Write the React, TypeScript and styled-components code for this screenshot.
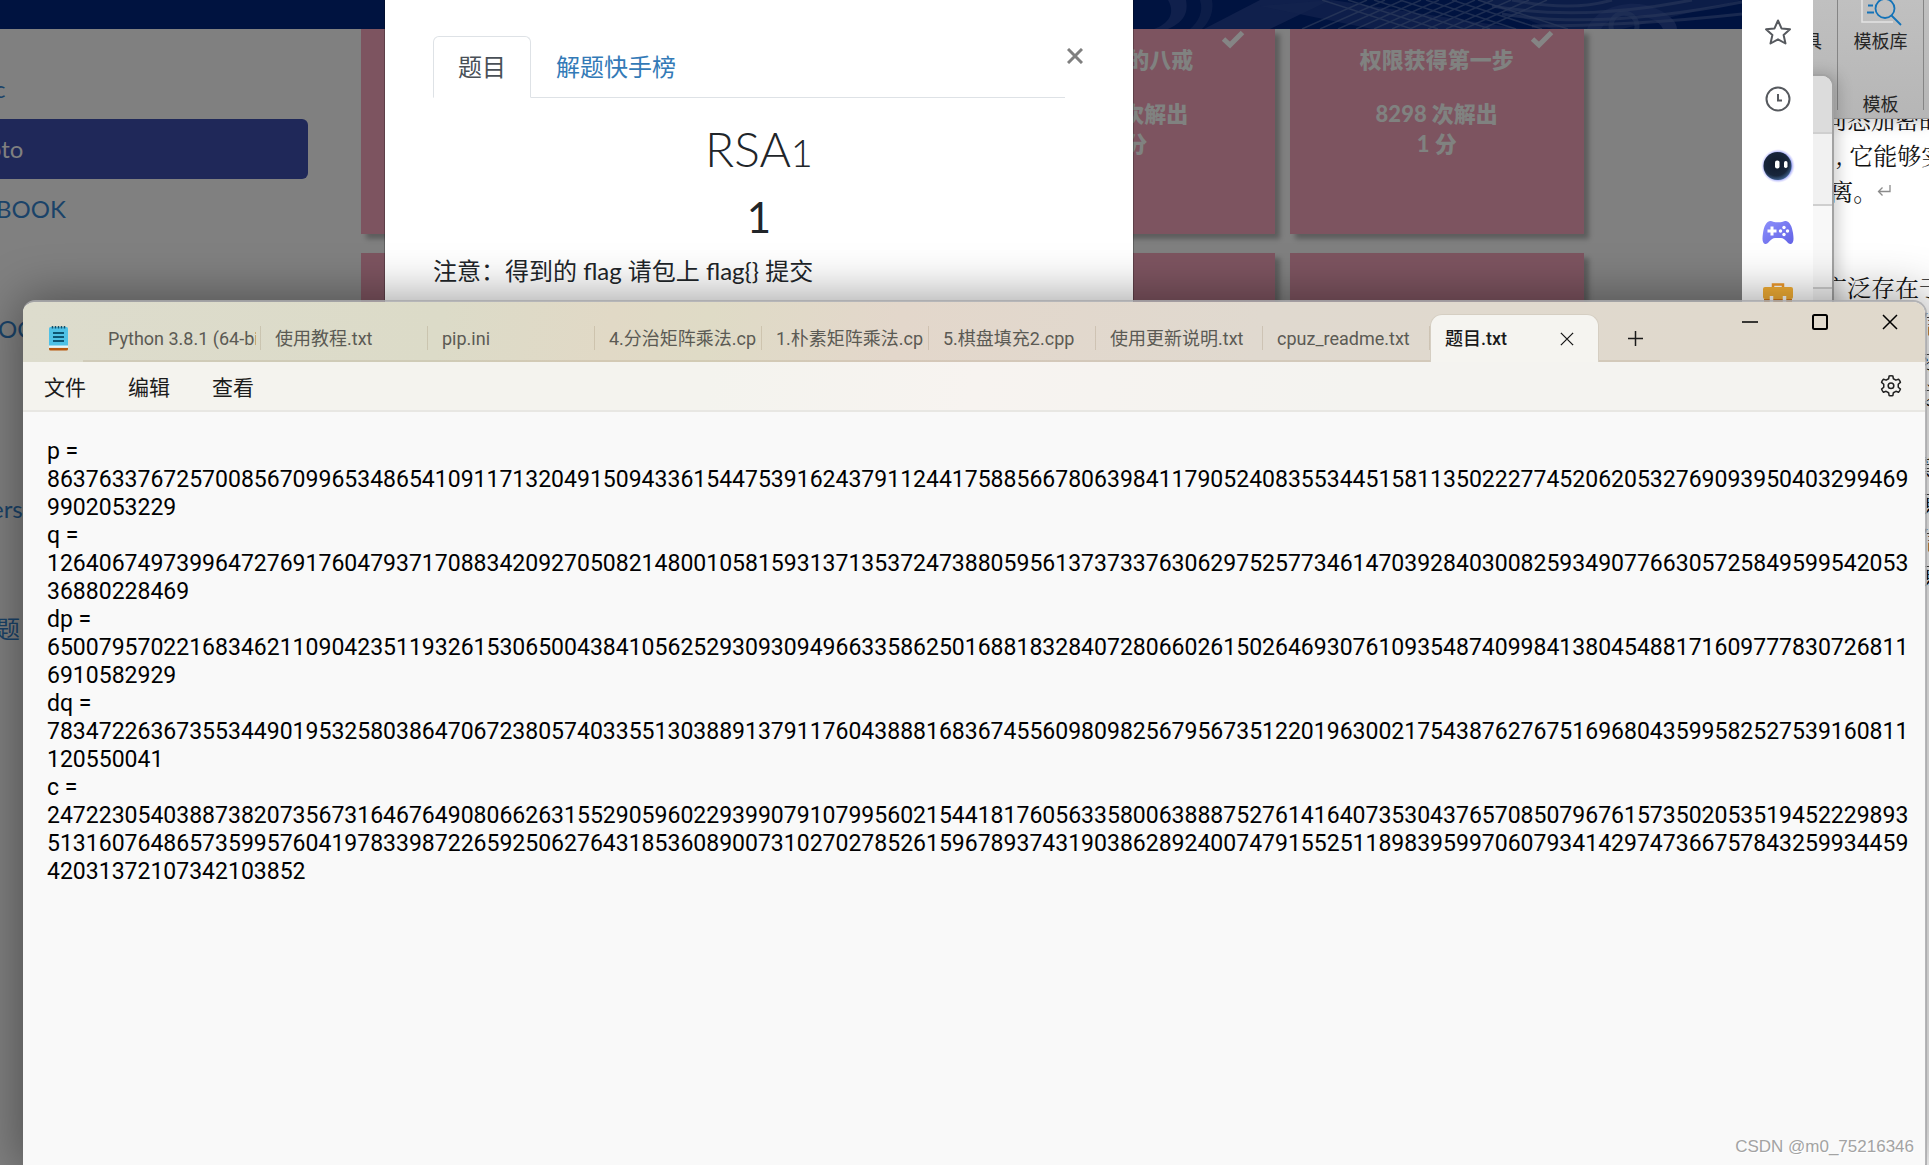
import React from "react";
import styled, { createGlobalStyle } from "styled-components";

const LATIN = '"Noto Sans", "Noto Sans CJK SC", sans-serif';
const LATO = 'Lato, "Noto Sans CJK SC", sans-serif';

const Global = createGlobalStyle`
  * { box-sizing: border-box; }
  body { margin: 0; font-family: ${LATIN}; overflow: hidden; }
  button { border: 0; padding: 0; margin: 0; background: none; font: inherit; color: inherit; }
  a { text-decoration: none; }
  h1, h2, p { margin: 0; font-weight: 400; }
  svg { display: block; }
`;

const Desktop = styled.div`
  position: relative;
  min-height: 100vh;
  overflow: hidden;
  background: #fff;
`;

/* ---------- word processor, far right ---------- */
const Writer = styled.section`
  position: absolute;
  top: 0;
  right: 0;
  bottom: 0;
  isolation: isolate;
  width: 116px;
  overflow: hidden;
  background: #fff;
`;
const Ribbon = styled.div`
  position: relative;
  z-index: 1;
  display: flex;
  height: 119px;
  background: linear-gradient(#c0c0c0, #b6b6b6);
  border-bottom: 1px solid #9a9a9a;
  box-shadow: 0 4px 14px rgba(0, 0, 0, 0.22);
  color: #262626;
  font: 18px/24px "Noto Sans CJK SC", sans-serif;
`;
const RibbonEdge = styled.div`
  width: 25px;
  height: 110px;
  padding-top: 28px;
  overflow: hidden;
  direction: rtl;
  padding-right: 15px;
  border-right: 1px solid #858585;
`;
const RibbonGroup = styled.div`
  display: flex;
  flex-direction: column;
  justify-content: space-between;
  align-items: center;
  width: 86px;
  height: 110px;
  border-right: 1px solid #858585;
`;
const RibbonLabel = styled.span`
  line-height: 14px;
`;
const RibbonButton = styled.button`
  display: flex;
  flex-direction: column;
  align-items: center;
  gap: 2px;
`;
const Document = styled.div`
  width: 160px;
  margin: -18px 0 0 10px;
  color: #111;
  font: 24px/36px "Noto Serif CJK SC", "Noto Sans CJK SC", serif;
  font-weight: 300;
  white-space: pre;
`;
const DocLine = styled.p<{ $blank: boolean }>`
  display: flex;
  align-items: center;
  height: ${(p) => (p.$blank ? 60 : 36)}px;
`;

const BackWindow = styled.section`
  position: absolute;
  top: 74px;
  right: 95px;
  bottom: 0;
  width: 40px;
  border: 2px solid #a2a2a2;
  border-radius: 0 12px 0 0;
  background: #f4f4f4;
  box-shadow: 4px 0 16px rgba(0, 0, 0, 0.2);
`;
const BackRow = styled.div<{ $h: number; $bg: string }>`
  height: ${(p) => p.$h}px;
  background: ${(p) => p.$bg};
  border-bottom: 2px solid #cfcfcf;

  &:first-child {
    border-radius: 0 10px 0 0;
  }
`;

/* ---------- browser ---------- */
const Browser = styled.section`
  position: absolute;
  inset: 0 116px 0 0;
  display: flex;
`;
const Page = styled.div`
  position: relative;
  flex: 1;
  min-width: 0;
  overflow: hidden;
  background: #808080;
`;
const Banner = styled.header`
  display: flex;
  justify-content: flex-end;
  height: 29px;
  background: #001340;
  overflow: hidden;
`;
const PageBody = styled.div`
  display: flex;
  gap: 53px;
  padding-right: 158px;
`;
const Nav = styled.nav`
  flex: none;
  display: flex;
  flex-direction: column;
  width: 308px;
  padding-top: 30px;
  overflow: hidden;
`;
const NavLink = styled.a<{ $active?: boolean; $cut: number }>`
  height: 60px;
  line-height: 60px;
  font-family: ${LATO};
  font-size: 24px;
  white-space: nowrap;
  text-indent: -${(p) => p.$cut}px;
  color: ${(p) => (p.$active ? "#808080" : "#1a4369")};
  background: ${(p) => (p.$active ? "#1f2859" : "transparent")};
  border-radius: 0 6px 6px 0;
`;
const Cards = styled.div`
  flex: 1;
  display: grid;
  grid-template-columns: repeat(4, 1fr);
  gap: 19px 15px;
  align-content: start;
`;
const Card = styled.button`
  position: relative;
  display: flex;
  flex-direction: column;
  align-items: center;
  height: 205px;
  padding-top: 16px;
  background: #7d5460;
  box-shadow: 5px 5px 5px rgba(0, 0, 0, 0.28);
  color: #808280;
  font: 900 22px/30px ${LATO};
  white-space: pre;
`;
const CardTitle = styled.span`
  margin-bottom: 24px;
`;
const CardCheck = styled.span`
  position: absolute;
  top: 0;
  right: 30px;
`;

const Modal = styled.div`
  position: absolute;
  top: 0;
  left: 385px;
  width: 748px;
  height: 420px;
  padding: 36px 48px 0;
  background: #fff;
  box-shadow: 0 0 0 1px rgba(0, 0, 0, 0.25);
  color: #212529;
  font: 24px/36px ${LATO};
`;
const ModalTop = styled.div`
  display: flex;
  align-items: flex-start;
`;
const ModalTabs = styled.div`
  flex: 1;
  display: flex;
  border-bottom: 1px solid #dee2e6;
`;
const ModalTab = styled.button<{ $active?: boolean }>`
  height: 62px;
  margin-bottom: -1px;
  padding: 0 24px;
  border: 1px solid ${(p) => (p.$active ? "#dee2e6" : "transparent")};
  border-bottom-color: ${(p) => (p.$active ? "#fff" : "transparent")};
  border-radius: 6px 6px 0 0;
  color: ${(p) => (p.$active ? "#495057" : "#337ab7")};
`;
const ModalClose = styled.button`
  margin-top: 10px;
  width: 20px;
  height: 20px;
  display: grid;
  place-items: center;
`;
const ModalTitle = styled.h1`
  margin-top: 21px;
  text-align: center;
  font: 300 48px/60px ${LATO};
`;
const OldStyle = styled.span`
  font-size: 38px;
`;
const ModalScore = styled.h2`
  margin-top: 8px;
  text-align: center;
  font: 400 42px/54px ${LATO};
`;
const ModalNote = styled.p`
  margin-top: 9px;
`;

const Side = styled.aside`
  display: flex;
  flex-direction: column;
  align-items: center;
  gap: 31px;
  width: 71px;
  padding-top: 14px;
  background: #fff;
`;
const SideButton = styled.button`
  display: grid;
  place-items: center;
  width: 36px;
  height: 36px;
`;

/* ---------- notepad ---------- */
const Notepad = styled.main`
  position: absolute;
  inset: 300px 2px 0 23px;
  display: flex;
  flex-direction: column;
  border: 2px solid rgba(170, 170, 172, 0.85);
  border-width: 2px 2px 0 0;
  border-radius: 12px 14px 0 0;
  box-shadow: 0 0 48px 4px rgba(0, 0, 0, 0.38);
  background: #f9f9f9;
  background-clip: padding-box;
  overflow: hidden;
`;
const TitleBar = styled.div`
  display: flex;
  height: 60px;
  background: linear-gradient(100deg, #dddccd 0, #dcdbc8 22%, #e1d9c6 31%, #dfdbc6 36%, #e3d7cb 46%, #e0d9cf 65%, #e0d9cc 100%);
`;
const AppIcon = styled.div`
  width: 60px;
  padding: 23px 0 0 26px;
`;
const Tabs = styled.div`
  display: flex;
  align-items: flex-end;
  padding-left: 11px;
  border-bottom: 2px solid rgba(165, 145, 120, 0.22);
`;
const Tab = styled.button`
  display: flex;
  align-items: center;
  width: 167px;
  height: 46px;
  padding: 3px 5px 0 14px;
  color: #5b5a54;
  font: 18px/24px Roboto, "Noto Sans CJK SC", sans-serif;
  background: linear-gradient(rgba(150, 130, 100, 0.25), rgba(150, 130, 100, 0.25)) right 12px / 1px 24px no-repeat;
`;
const TabName = styled.span`
  flex: 1;
  overflow: hidden;
  text-align: left;
  white-space: nowrap;
`;
const ActiveTab = styled.div`
  display: flex;
  align-items: center;
  width: 169px;
  height: 48px;
  margin-bottom: -2px;
  padding: 0 24px 0 14px;
  border: 1px solid #d5cec2;
  border-width: 1px 1px 0;
  border-radius: 12px 12px 0 0;
  background: #f5f4f0;
  color: #1a1a1a;
  font: 500 18px/24px Roboto, "Noto Sans CJK SC", sans-serif;
`;
const NewTab = styled.button`
  display: grid;
  place-items: center;
  width: 61px;
  height: 46px;
  padding: 2px 0 0 12px;
`;
const WindowButtons = styled.div`
  display: flex;
  margin-left: auto;
`;
const WindowButton = styled.button`
  display: grid;
  place-items: center;
  width: 70px;
  height: 40px;
`;
const MenuBar = styled.div`
  display: flex;
  align-items: center;
  height: 50px;
  border-bottom: 2px solid #e8e7e3;
  background: linear-gradient(100deg, #f4f3ee 0, #f4f3ee 36%, #f7f3f0 50%, #f4f3f0 70%);
  color: #1b1b1b;
  font: 21px/28px "Noto Sans CJK SC", sans-serif;
`;
const MenuItem = styled.button`
  padding: 0 21px;
`;
const Settings = styled.button`
  margin: 0 21px 0 auto;
`;
const Editor = styled.textarea`
  flex: 1;
  width: 100%;
  padding: 26px 6px 0 24px;
  border: 0;
  outline: 0;
  resize: none;
  overflow: hidden;
  background: #f9f9f9;
  color: #000;
  font: 23px/28px Roboto, "Noto Sans CJK SC", sans-serif;
  overflow-wrap: break-word;
`;
const Watermark = styled.div`
  position: absolute;
  right: 15px;
  bottom: 6px;
  color: #a3a3a3;
  font: 17px/24px "Liberation Sans", Arial, sans-serif;
  text-shadow: 1px 1px 0 #fff;
`;

const NAV = [
  { text: "c", cut: 6 },
  { text: "pto", cut: 12, active: true },
  { text: "BOOK", cut: 4 },
  { text: "", cut: 0 },
  { text: "OOK", cut: 2 },
  { text: "", cut: 0 },
  { text: "", cut: 0 },
  { text: "ers", cut: 9 },
  { text: "", cut: 0 },
  { text: "题", cut: 4 },
];

const TABS = [
  "Python 3.8.1 (64-bit)",
  "使用教程.txt",
  "pip.ini",
  "4.分治矩阵乘法.cpp",
  "1.朴素矩阵乘法.cpp",
  "5.棋盘填充2.cpp",
  "使用更新说明.txt",
  "cpuz_readme.txt",
];

const DOC = ["同态加密的", "  , 它能够实", " 离。", "", "广泛存在于", "　　　　信", "　　　　求", "　　　　之", "", "　　　　等", "　　　　原", "　　　　信", "　　　　原"];

const CONTENT = [
  "p = 8637633767257008567099653486541091171320491509433615447539162437911244175885667806398411790524083553445158113502227745206205327690939504032994699902053229",
  "q = 12640674973996472769176047937170883420927050821480010581593137135372473880595613737337630629752577346147039284030082593490776630572584959954205336880228469",
  "dp = 6500795702216834621109042351193261530650043841056252930930949663358625016881832840728066026150264693076109354874099841380454881716097778307268116910582929",
  "dq = 783472263673553449019532580386470672380574033551303889137911760438881683674556098098256795673512201963002175438762767516968043599582527539160811120550041",
  "c = 24722305403887382073567316467649080662631552905960229399079107995602154418176056335800638887527614164073530437657085079676157350205351945222989351316076486573599576041978339872265925062764318536089007310270278526159678937431903862892400747915525118983959970607934142974736675784325993445942031372107342103852",
].join("\n");

const Check = () => (
  <svg width="24" height="20" viewBox="0 0 24 20" fill="none" stroke="#858585" strokeWidth="5">
    <path d="M2.500 10 9 16 21.500 3.500" />
  </svg>
);

const BannerArt = () => (
  <svg width="610" height="29" viewBox="0 0 610 29" fill="none">
    <g fill="#14244f">
      <path d="M36 0c8 14 0 24-14 29h14c18-8 20-18 18-29z" opacity=".8" />
      <path d="M68 0c4 12-2 22-10 29h12c8-8 12-18 10-29z" opacity=".6" />
      <path d="M72 29 128 0h70l-60 29z" opacity=".8" />
      <path d="M128 6 240 29h150L200 0z" opacity=".7" />
      <path d="M345 0 420 29h70L610 0z" opacity=".6" />
      <path d="M455 29c8-22 46-32 70-20 14 6 20 14 20 20h-14c-8-18-52-18-62 0z" />
    </g>
    <g stroke="#33415f" strokeWidth="1.500" opacity=".6">
      {Array.from({ length: 11 }, (_, i) => (
        <path key={i} d={`M${170 + i * 18} 29 L${235 + i * 18} 0`} />
      ))}
      {Array.from({ length: 7 }, (_, i) => (
        <path key={"b" + i} d={`M${190 + i * 26} 0 L${280 + i * 26} 29`} />
      ))}
    </g>
    <g stroke="#2a385b" strokeWidth="3" opacity=".6">
      <path d="M370 14 Q470 30 610 2" />
      <path d="M360 6 Q450 22 560 0" />
      <path d="M400 26 Q500 26 610 14" />
      <path d="M380 0 Q440 12 480 0" />
    </g>
    <circle cx="492" cy="26" r="13" stroke="#26355a" strokeWidth="5" opacity=".5" />
  </svg>
);

const Star = () => (
  <svg width="28" height="28" viewBox="0 0 28 28" fill="none" stroke="#56595e" strokeWidth="2" strokeLinejoin="round">
    <path d="M14 2.500l3.500 7.900 8.500.9-6.400 5.700 1.900 8.500L14 21.300l-7.500 4.200 1.900-8.500L2 11.300l8.500-.9z" />
  </svg>
);
const Clock = () => (
  <svg width="28" height="28" viewBox="0 0 28 28" fill="none" stroke="#56595e" strokeWidth="2">
    <circle cx="14" cy="14" r="11.500" />
    <path d="M14 9v6.500h4" />
  </svg>
);
const Ball = () => (
  <svg width="34" height="34" viewBox="0 0 34 34">
    <defs>
      <radialGradient id="halo">
        <stop offset=".8" stopColor="#9aa4f5" />
        <stop offset="1" stopColor="#d6d0ff" stopOpacity="0" />
      </radialGradient>
      <radialGradient id="ball" cx=".45" cy=".4" r=".6">
        <stop offset="0" stopColor="#10192b" />
        <stop offset=".75" stopColor="#18263c" />
        <stop offset="1" stopColor="#3b5c86" />
      </radialGradient>
    </defs>
    <circle cx="17" cy="17" r="17" fill="url(#halo)" />
    <circle cx="16.500" cy="17" r="14" fill="url(#ball)" />
    <rect x="14" y="11.500" width="4.500" height="8" rx="2" fill="#fff" />
    <rect x="23" y="12" width="3.500" height="7" rx="1.700" fill="#fff" />
  </svg>
);
const Pad = () => (
  <svg width="32" height="26" viewBox="0 0 32 26">
    <defs>
      <linearGradient id="pad" x2="1" y2="1">
        <stop stopColor="#8d90fb" />
        <stop offset="1" stopColor="#6262e6" />
      </linearGradient>
    </defs>
    <path fill="url(#pad)" d="M8 1c2-.6 3.500 1.200 5.500 1.200h5C20.500 2.200 22 .4 24 1c4 .9 6 5.500 7 12 .9 6 .8 10-2 11-3 .9-5.500-6-10-6h-6c-4.500 0-7 6.900-10 6C.2 23 .1 19 1 13 2 6.500 4 1.900 8 1z" />
    <path stroke="#fff" strokeWidth="3" d="M10 6.500v9M5.500 11h9" />
    <g fill="#fff">
      <circle cx="22" cy="7.500" r="1.700" />
      <circle cx="22" cy="14.500" r="1.700" />
      <circle cx="18.500" cy="11" r="1.700" />
      <circle cx="25.500" cy="11" r="1.700" />
    </g>
  </svg>
);
const Toolbox = () => (
  <svg width="32" height="36" viewBox="0 0 32 36">
    <path d="M11 6V2.500h10V6" fill="none" stroke="#f09a2a" strokeWidth="2.500" />
    <rect x="1" y="5" width="30" height="12" rx="2" fill="#f5b036" />
    <rect x="2" y="17" width="28" height="9" fill="#d97c17" />
    <path d="M9.500 14v7M22.500 14v7" stroke="#fff" strokeWidth="3.500" />
  </svg>
);
const Template = () => (
  <svg width="42" height="26" viewBox="0 0 42 26" fill="none">
    <path d="M2 0v22h31" stroke="#e4e4e4" strokeWidth="1.500" />
    <g stroke="#1473b8" strokeWidth="1.800">
      <circle cx="25" cy="8.500" r="9.500" />
      <path d="M31.500 15.500 41 25M8 5.500h5M7 12.500h7" />
    </g>
  </svg>
);
const Return = () => (
  <svg width="14" height="14" viewBox="0 0 14 14" fill="none" stroke="#8b8b8b" strokeWidth="1.300">
    <path d="M13 1v6.500H1.500M5.500 3.500l-4 4 4 4" />
  </svg>
);
const NoteIcon = () => (
  <svg width="19" height="26" viewBox="0 0 19 26">
    <rect y="2" width="19" height="20" rx="1.500" fill="#4fc1e6" />
    <path d="M0 20.500h19v2H0z" fill="#e8f3f6" />
    <path d="M0 23h19v1a1.500 1.500 0 0 1-1.500 1.500h-16A1.500 1.500 0 0 1 0 24z" fill="#b9590f" />
    <path d="M3.500 1v2.500M6.500 1v2.500M9.500 1v2.500M12.500 1v2.500M15.500 1v2.500" stroke="#12506b" strokeWidth="1.500" />
    <path d="M4 8h11M4 12h11M4 16h11" stroke="#0c5574" strokeWidth="1.800" />
  </svg>
);
const Cross = ({ size, width = 1.5, color = "#1a1a1a" }: { size: number; width?: number; color?: string }) => (
  <svg width={size} height={size} viewBox="0 0 16 16" fill="none" stroke={color} strokeWidth={width}>
    <path d="M1 1l14 14M15 1 1 15" />
  </svg>
);
const Gear = () => (
  <svg width="26" height="26" viewBox="0 0 24 23" fill="none" stroke="#222" strokeWidth="1.400" strokeLinejoin="round">
    <path d="M9.800 4.800 10.300 2.200q1.700-.5 3.400 0l.5 2.600 2.300 1.300 2.500-.9q1.200 1.300 1.700 2.900l-2 1.800v2.700l2 1.800q-.5 1.600-1.700 2.900l-2.500-.9-2.300 1.300-.5 2.600q-1.700.5-3.400 0l-.5-2.600-2.300-1.300-2.500.9q-1.200-1.300-1.700-2.900l2-1.800V9.900l-2-1.800q.5-1.600 1.700-2.900l2.500.9z" />
    <circle cx="12" cy="11.250" r="2.600" />
  </svg>
);

export default function App() {
  return (
    <Desktop>
      <Global />

      <Writer>
        <Ribbon>
          <RibbonEdge>具</RibbonEdge>
          <RibbonGroup>
            <RibbonButton>
              <Template />
              模板库
            </RibbonButton>
            <RibbonLabel>模板</RibbonLabel>
          </RibbonGroup>
        </Ribbon>
        <Document>
          {DOC.map((line, i) => (
            <DocLine key={i} $blank={i === 3}>
              {line}
              {i === 2 && <Return />}
            </DocLine>
          ))}
        </Document>
      </Writer>

      <BackWindow>
        <BackRow $h={58} $bg="#dcdcdc" />
        <BackRow $h={72} $bg="#f1f1f1" />
        <BackRow $h={83} $bg="#f8f8f8" />
      </BackWindow>

      <Browser>
        <Page>
          <Banner>
            <BannerArt />
          </Banner>
          <PageBody>
            <Nav>
              {NAV.map((n, i) => (
                <NavLink key={i} href="#" $cut={n.cut} $active={n.active}>
                  {n.text}
                </NavLink>
              ))}
            </Nav>
            <Cards>
              <Card />
              <Card />
              <Card>
                <CardTitle>　　　的八戒</CardTitle>
                <span>8298 次解出</span>
                <span>1 分</span>
                <CardCheck>
                  <Check />
                </CardCheck>
              </Card>
              <Card>
                <CardTitle>权限获得第一步</CardTitle>
                <span>8298 次解出</span>
                <span>1 分</span>
                <CardCheck>
                  <Check />
                </CardCheck>
              </Card>
              <Card />
              <Card />
              <Card />
              <Card />
            </Cards>
          </PageBody>

          <Modal role="dialog" aria-label="RSA1">
            <ModalTop>
              <ModalTabs role="tablist">
                <ModalTab role="tab" $active>
                  题目
                </ModalTab>
                <ModalTab role="tab">解题快手榜</ModalTab>
              </ModalTabs>
              <ModalClose aria-label="关闭">
                <Cross size={16} width={3} color="#7f7f7f" />
              </ModalClose>
            </ModalTop>
            <ModalTitle>
              RSA<OldStyle>1</OldStyle>
            </ModalTitle>
            <ModalScore>1</ModalScore>
            <ModalNote>注意：得到的 flag 请包上 flag{"{}"} 提交</ModalNote>
          </Modal>
        </Page>
        <Side>
          {[Star, Clock, Ball, Pad, Toolbox].map((Icon, i) => (
            <SideButton key={i}>
              <Icon />
            </SideButton>
          ))}
        </Side>
      </Browser>

      <Notepad>
        <TitleBar>
          <AppIcon>
            <NoteIcon />
          </AppIcon>
          <Tabs role="tablist">
            {TABS.map((t) => (
              <Tab key={t} role="tab">
                <TabName>{t}</TabName>
              </Tab>
            ))}
            <ActiveTab role="tab" aria-selected="true">
              <TabName>题目.txt</TabName>
              <button aria-label="关闭标签页">
                <Cross size={14} />
              </button>
            </ActiveTab>
            <NewTab aria-label="新建标签页">
              <svg width="15" height="15" viewBox="0 0 15 15" stroke="#1a1a1a" strokeWidth="1.500">
                <path d="M7.500 0v15M0 7.500h15" />
              </svg>
            </NewTab>
          </Tabs>
          <WindowButtons>
            <WindowButton aria-label="最小化">
              <svg width="16" height="16" viewBox="0 0 16 16" stroke="#000" strokeWidth="1.500">
                <path d="M0 8h16" />
              </svg>
            </WindowButton>
            <WindowButton aria-label="最大化">
              <svg width="16" height="16" viewBox="0 0 16 16" fill="none" stroke="#000" strokeWidth="2">
                <rect x="1" y="1" width="14" height="14" rx="1.500" />
              </svg>
            </WindowButton>
            <WindowButton aria-label="关闭">
              <Cross size={16} color="#000" />
            </WindowButton>
          </WindowButtons>
        </TitleBar>
        <MenuBar>
          <MenuItem>文件</MenuItem>
          <MenuItem>编辑</MenuItem>
          <MenuItem>查看</MenuItem>
          <Settings aria-label="设置">
            <Gear />
          </Settings>
        </MenuBar>
        <Editor aria-label="文本编辑器" spellCheck={false} defaultValue={CONTENT} />
      </Notepad>
      <Watermark>CSDN @m0_75216346</Watermark>
    </Desktop>
  );
}
